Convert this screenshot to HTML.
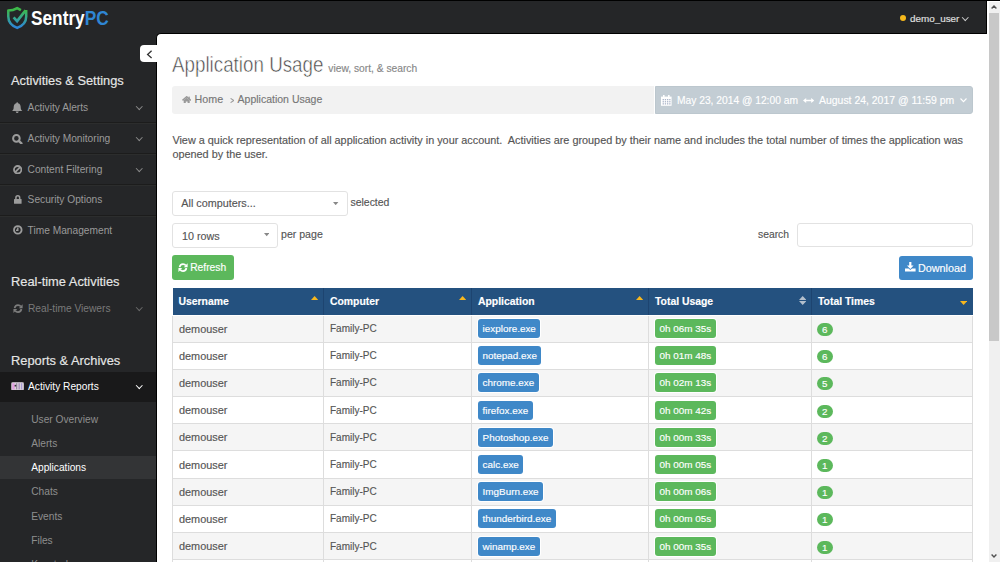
<!DOCTYPE html>
<html><head><meta charset="utf-8">
<style>
*{box-sizing:border-box;margin:0;padding:0}
html,body{width:1000px;height:562px;overflow:hidden;background:#fff}
body{position:relative;font-family:"Liberation Sans",sans-serif;color:#555;-webkit-text-stroke:0.15px currentColor}
.a{position:absolute}
.t{position:absolute;white-space:pre;line-height:1}
#frame{position:absolute;left:0;top:0;width:987px;height:562px;background:#252628;border-top:1px solid #000;border-right:1px solid #000}
#panel{position:absolute;left:156px;top:33px;width:831px;height:540px;background:#fff;border-left:1px solid #000;border-top:1px solid #000;border-top-left-radius:5px}
#sb{position:absolute;left:987px;top:0;width:13px;height:562px;background:#fff}
.sec{color:#e6e6e6;font-size:12.85px}
.itm{color:#9a9a9a;font-size:10.2px;-webkit-text-stroke:0}
.sub{color:#8e8e8e;font-size:10.2px;-webkit-text-stroke:0}
.div{position:absolute;left:0;width:156px;height:2px;border-top:1px solid #1c1c1c;background:#2c2d2d}
.chev{position:absolute;width:6px;height:6px;border-right:1.3px solid #8a8a8a;border-bottom:1.3px solid #8a8a8a;transform:rotate(45deg)}
table{position:absolute;left:172px;top:288px;width:801px;border-collapse:collapse}
th{background:#24517f;color:#fff;font-weight:bold;font-size:10.4px;text-align:left;height:27px;padding:1px 0 0 6px;border-bottom:1px solid #fff;border-left:1px solid #1d4470;position:relative}
td{height:27.2px;font-size:10.4px;color:#555;padding:0 0 0 6px;border:1px solid #ddd;border-top:0;white-space:nowrap}
tr:nth-child(even) td{background:#f5f5f5}
td:nth-child(1){font-size:10.9px}
td:nth-child(2){font-size:10px}
.lb{display:inline-block;background:#3f88c8;color:#fff;font-size:9.9px;line-height:19px;height:19px;padding:0 4.4px 0 4.6px;border-radius:3px;vertical-align:middle;position:relative;top:0px;box-shadow:0 0 0 1px #fff}
.lg{display:inline-block;background:#5cb85c;color:#fff;font-size:9.9px;line-height:19px;height:19px;padding:0 4.4px 0 4.6px;border-radius:3px;vertical-align:middle;position:relative;top:0px;box-shadow:0 0 0 1px #fff}
.bd{display:inline-block;background:#5cb85c;color:#fff;font-size:9.8px;line-height:13px;height:13px;width:15.5px;text-align:center;border-radius:7px;vertical-align:middle;margin-left:-1px;position:relative;top:1px}
</style></head><body>
<div id="frame"></div>
<!-- navbar -->
<svg class="a" style="left:4px;top:4px" width="28" height="28" viewBox="0 0 28 28">
<defs><linearGradient id="sg" gradientUnits="userSpaceOnUse" x1="0" y1="4" x2="0" y2="24"><stop offset="0.1" stop-color="#3db94a"/><stop offset="0.5" stop-color="#35a78f"/><stop offset="0.95" stop-color="#2d86d6"/></linearGradient></defs>
<path d="M16.9 6.2L13.2 4.1C10.5 5.7 7.5 6.5 4.3 6.5V12.5C4.3 18 8 21.9 13.2 23.9C18.4 21.9 22.2 18 22.2 12.5V6" fill="none" stroke="url(#sg)" stroke-width="2.5" stroke-linejoin="round"/>
<path d="M9.6 13.4L13.1 17.2L21.6 6.4" fill="none" stroke="url(#sg)" stroke-width="2.7"/>
</svg>
<div class="t" style="left:30.8px;top:7.6px;font-size:20.2px;font-weight:bold;color:#fff;-webkit-text-stroke:0;transform-origin:0 0;transform:scaleX(0.855)">Sentry<span style="color:#2f86d4">PC</span></div>
<div class="a" style="left:899.8px;top:14.8px;width:6.4px;height:6.4px;border-radius:50%;background:#f6b81c"></div>
<div class="t" style="left:910px;top:13.6px;font-size:9.9px;color:#e0e0e0">demo_user</div>
<div class="chev" style="left:963px;top:14.5px;width:4.5px;height:4.5px;border-color:#ccc;border-width:0 1.1px 1.1px 0"></div>

<!-- panel -->
<div id="panel"></div>
<div class="a" style="left:140px;top:45px;width:17px;height:17px;background:#fff;border-radius:4px 0 0 4px"></div>
<svg class="a" style="left:145.5px;top:50px" width="7" height="9" viewBox="0 0 7 9"><path d="M5.6 0.8L1.6 4.4L5.6 8" fill="none" stroke="#333" stroke-width="1.3"/></svg>

<!-- sidebar -->
<div class="t sec" style="left:11px;top:74.7px">Activities &amp; Settings</div>
<div class="t itm" style="left:27.6px;top:103.0px">Activity Alerts</div>
<div class="div" style="top:122px"></div>
<div class="t itm" style="left:27.6px;top:134.3px">Activity Monitoring</div>
<div class="div" style="top:153px"></div>
<div class="t itm" style="left:27.6px;top:165.0px">Content Filtering</div>
<div class="div" style="top:184px"></div>
<div class="t itm" style="left:27.6px;top:195.4px">Security Options</div>
<div class="div" style="top:215px"></div>
<div class="t itm" style="left:27.6px;top:226.0px">Time Management</div>
<div class="chev" style="left:136.5px;top:104px;border-color:#8a8a8a;width:4.5px;height:4.5px;border-width:0 1.1px 1.1px 0"></div>
<div class="chev" style="left:136.5px;top:135px;border-color:#8a8a8a;width:4.5px;height:4.5px;border-width:0 1.1px 1.1px 0"></div>
<div class="chev" style="left:136.5px;top:166px;border-color:#8a8a8a;width:4.5px;height:4.5px;border-width:0 1.1px 1.1px 0"></div>

<div class="t sec" style="left:11px;top:275.7px">Real-time Activities</div>
<div class="t itm" style="left:28px;top:304.1px;color:#7a7a7a">Real-time Viewers</div>
<div class="chev" style="left:136.5px;top:305px;border-color:#6a6a6a;width:4.5px;height:4.5px;border-width:0 1.1px 1.1px 0"></div>

<div class="t sec" style="left:11px;top:354.5px">Reports &amp; Archives</div>
<div class="a" style="left:0;top:372px;width:156px;height:30px;background:#19191a"></div>
<div class="t itm" style="left:28px;top:382.1px;color:#fff">Activity Reports</div>
<div class="chev" style="left:136.5px;top:383px;border-color:#fff;width:4.5px;height:4.5px;border-width:0 1.3px 1.3px 0"></div>


<div class="t sub" style="left:31.2px;top:414.9px">User Overview</div>
<div class="t sub" style="left:31.2px;top:438.9px">Alerts</div>
<div class="a" style="left:0;top:455.5px;width:156px;height:23.5px;background:#333436"></div>
<div class="t sub" style="left:31.2px;top:462.9px;color:#fff">Applications</div>
<div class="t sub" style="left:31.2px;top:487.4px">Chats</div>
<div class="t sub" style="left:31.2px;top:511.7px">Events</div>
<div class="t sub" style="left:31.2px;top:535.7px">Files</div>
<div class="t sub" style="left:31.2px;top:559.7px">Keystrokes</div>


<!-- sidebar icons -->
<svg class="a" style="left:12.4px;top:102px" width="10.4" height="11" viewBox="0 0 10.4 11"><path d="M5.2 0.3C5.8 0.3 6.1 0.7 6.1 1.2C8 1.7 8.7 3.4 8.7 5.3C8.7 7.3 9.3 8.1 10.3 8.9L0.1 8.9C1.1 8.1 1.7 7.3 1.7 5.3C1.7 3.4 2.4 1.7 4.3 1.2C4.3 0.7 4.6 0.3 5.2 0.3Z M3.7 9.4L6.7 9.4C6.7 10.3 6 10.9 5.2 10.9C4.4 10.9 3.7 10.3 3.7 9.4Z" fill="#9c9c9c"/></svg>
<svg class="a" style="left:12.4px;top:133.6px" width="10.4" height="10.4" viewBox="0 0 10.4 10.4"><circle cx="4.4" cy="4.4" r="3.3" fill="none" stroke="#9c9c9c" stroke-width="2"/><path d="M6.8 6.8L9.4 9.4" stroke="#9c9c9c" stroke-width="2.4" stroke-linecap="round"/></svg>
<svg class="a" style="left:13px;top:165px" width="9.4" height="9.4" viewBox="0 0 9.4 9.4"><circle cx="4.7" cy="4.7" r="3.7" fill="none" stroke="#9c9c9c" stroke-width="1.8"/><path d="M7.2 2.2L2.2 7.2" stroke="#9c9c9c" stroke-width="1.8"/></svg>
<svg class="a" style="left:14px;top:194.8px" width="7.6" height="8.8" viewBox="0 0 7.6 8.8"><path d="M1.9 4V2.9C1.9 1.6 2.7 0.8 3.8 0.8C4.9 0.8 5.7 1.6 5.7 2.9V4" fill="none" stroke="#9c9c9c" stroke-width="1.5"/><rect x="0" y="3.9" width="7.6" height="4.9" rx="0.6" fill="#9c9c9c"/></svg>
<svg class="a" style="left:13px;top:224.8px" width="9.6" height="9.8" viewBox="0 0 9.6 9.8"><circle cx="4.8" cy="4.9" r="3.8" fill="none" stroke="#9c9c9c" stroke-width="1.8"/><path d="M4.8 2.6V5.2H3" fill="none" stroke="#9c9c9c" stroke-width="1.4"/></svg>
<svg class="a" style="left:12.8px;top:303.8px" width="10" height="9.2" viewBox="0 0 10 9.2"><path d="M1.6 4.2C1.9 2.3 3.3 1.1 5 1.1C6.2 1.1 7.2 1.6 7.8 2.5" fill="none" stroke="#7c7c7c" stroke-width="1.7"/><path d="M9.6 0.2V4.2H5.8Z" fill="#7c7c7c"/><path d="M8.4 5C8.1 6.9 6.7 8.1 5 8.1C3.8 8.1 2.8 7.6 2.2 6.7" fill="none" stroke="#7c7c7c" stroke-width="1.7"/><path d="M0.4 9V5H4.2Z" fill="#7c7c7c"/></svg>
<svg class="a" style="left:11px;top:381.6px" width="13.2" height="8.6" viewBox="0 0 13.2 8.6"><rect x="0.3" y="0.3" width="12.6" height="8" rx="1.6" fill="#d9d2da" stroke="#bdb5c0" stroke-width="0.6"/><rect x="1.3" y="1.2" width="2.4" height="6.2" fill="#e29ee0"/><rect x="5.2" y="1.2" width="1" height="6.2" fill="#8a7a95"/><rect x="7.6" y="1.2" width="1.1" height="6.2" fill="#9b7fb3"/><rect x="10" y="1.2" width="1.2" height="6.2" fill="#a99cd6"/><circle cx="4.4" cy="3.7" r="0.9" fill="#333"/></svg>

<!-- content -->
<div class="t" style="left:172.3px;top:54.3px;font-size:21.6px;color:#444;-webkit-text-stroke:0.55px #fff;transform-origin:0 0;transform:scaleX(0.87)">Application Usage</div>
<div class="t" style="left:328.3px;top:63.8px;font-size:10.25px;color:#888">view, sort, &amp; search</div>

<div class="a" style="left:172px;top:86px;width:482px;height:28px;background:#f2f2f2;border-radius:3px 0 0 3px"></div>
<div class="t" style="left:194.6px;top:94.4px;font-size:10.7px;color:#777">Home</div>
<div class="t" style="left:237.6px;top:94.2px;font-size:10.5px;color:#777">Application Usage</div>

<div class="a" style="left:655px;top:86px;width:317.5px;height:28px;background:#c3cdd4;border:1px solid #bcc7ce;border-radius:0 3px 3px 0"></div>
<div class="t" style="left:677px;top:96.1px;font-size:10.26px;color:#fff">May 23, 2014 @ 12:00 am</div>
<div class="t" style="left:819px;top:96.1px;font-size:10.45px;color:#fff">August 24, 2017 @ 11:59 pm</div>

<div class="t" style="left:172.4px;top:134.7px;font-size:10.86px;color:#555">View a quick representation of all application activity in your account.  Activities are grouped by their name and includes the total number of times the application was</div>
<div class="t" style="left:172.4px;top:149.3px;font-size:10.86px;color:#555">opened by the user.</div>

<div class="a" style="left:172px;top:191px;width:176px;height:24.5px;border:1px solid #e2e2e2;border-radius:3px"></div>
<div class="t" style="left:181.3px;top:198.2px;font-size:10.8px;color:#555">All computers...</div>
<div class="t" style="left:350.5px;top:198.1px;font-size:10.44px;color:#555">selected</div>

<div class="a" style="left:172px;top:223.4px;width:106px;height:24.5px;border:1px solid #e2e2e2;border-radius:3px"></div>
<div class="t" style="left:182px;top:230.5px;font-size:10.77px;color:#555">10 rows</div>
<div class="t" style="left:281px;top:229.4px;font-size:10.59px;color:#555">per page</div>

<div class="t" style="left:758px;top:229.6px;font-size:10.33px;color:#555">search</div>
<div class="a" style="left:797px;top:223.4px;width:176px;height:24px;border:1px solid #e2e2e2;border-radius:3px"></div>

<div class="a" style="left:172px;top:255.4px;width:61.5px;height:24.8px;background:#5cb85c;border-radius:3px"></div>
<div class="t" style="left:190.2px;top:263.3px;font-size:10.28px;color:#fff">Refresh</div>
<div class="a" style="left:899px;top:255.6px;width:74px;height:24.4px;background:#3f88c8;border-radius:3px"></div>
<div class="t" style="left:918px;top:263.2px;font-size:10.79px;color:#fff">Download</div>


<!-- content icons -->
<svg class="a" style="left:181.6px;top:95.6px" width="9.4" height="7.6" viewBox="0 0 9.4 7.6"><path d="M0.5 4.4L4.7 0.8L8.9 4.4" fill="none" stroke="#999" stroke-width="1.5"/><rect x="6.5" y="0.6" width="1.3" height="2.6" fill="#999"/><path d="M1.7 4.3L4.7 1.8L7.7 4.3V7.6H5.6V5.4H3.8V7.6H1.7Z" fill="#999"/></svg>
<svg class="a" style="left:229.6px;top:97.8px" width="4.6" height="5" viewBox="0 0 4.6 5"><path d="M0.6 0.4L3.8 2.5L0.6 4.6" fill="none" stroke="#999" stroke-width="1.1"/></svg>
<svg class="a" style="left:661.2px;top:95px" width="10.6" height="10.8" viewBox="0 0 10.6 10.8"><path d="M0 1.6H10.6V10.8H0Z" fill="#fff"/><rect x="2" y="0" width="1.6" height="2.6" fill="#fff"/><rect x="7" y="0" width="1.6" height="2.6" fill="#fff"/><g fill="#aab4c8"><rect x="1.6" y="4" width="1.3" height="1.3"/><rect x="3.8" y="4" width="1.3" height="1.3"/><rect x="6" y="4" width="1.3" height="1.3"/><rect x="8.2" y="4" width="1.3" height="1.3"/><rect x="1.6" y="6.1" width="1.3" height="1.3"/><rect x="3.8" y="6.1" width="1.3" height="1.3"/><rect x="6" y="6.1" width="1.3" height="1.3"/><rect x="8.2" y="6.1" width="1.3" height="1.3"/><rect x="1.6" y="8.2" width="1.3" height="1.3"/><rect x="3.8" y="8.2" width="1.3" height="1.3"/><rect x="6" y="8.2" width="1.3" height="1.3"/><rect x="8.2" y="8.2" width="1.3" height="1.3"/></g></svg>
<svg class="a" style="left:802.9px;top:97.6px" width="11.4" height="5" viewBox="0 0 11.4 5"><path d="M2.5 2.5H8.9" stroke="#fff" stroke-width="1.5"/><path d="M0 2.5L3.2 0V5Z M11.4 2.5L8.2 0V5Z" fill="#fff"/></svg>
<svg class="a" style="left:959.6px;top:98.2px" width="7" height="4.4" viewBox="0 0 7 4.4"><path d="M0.5 0.5L3.5 3.6L6.5 0.5" fill="none" stroke="#fff" stroke-width="1.1"/></svg>
<svg class="a" style="left:333.4px;top:201.6px" width="5.4" height="3.2" viewBox="0 0 5.4 3.2"><path d="M0 0H5.4L2.7 3.2Z" fill="#888"/></svg>
<svg class="a" style="left:264px;top:233.4px" width="5.4" height="3.2" viewBox="0 0 5.4 3.2"><path d="M0 0H5.4L2.7 3.2Z" fill="#888"/></svg>
<svg class="a" style="left:178px;top:263px" width="10" height="9.2" viewBox="0 0 10 9.2"><path d="M1.6 4.2C1.9 2.3 3.3 1.1 5 1.1C6.2 1.1 7.2 1.6 7.8 2.5" fill="none" stroke="#fff" stroke-width="1.7"/><path d="M9.6 0.2V4.2H5.8Z" fill="#fff"/><path d="M8.4 5C8.1 6.9 6.7 8.1 5 8.1C3.8 8.1 2.8 7.6 2.2 6.7" fill="none" stroke="#fff" stroke-width="1.7"/><path d="M0.4 9V5H4.2Z" fill="#fff"/></svg>
<svg class="a" style="left:905px;top:262.3px" width="10.6" height="9.6" viewBox="0 0 10.6 9.6"><path d="M4.2 0H6.4V3.6H8.6L5.3 7L2 3.6H4.2Z" fill="#fff"/><path d="M0 6.4H3.6L5.3 8L7 6.4H10.6V9.6H0Z" fill="#fff"/></svg>

<table>
<tr><th style="width:151px;border-left:0">Username</th><th style="width:148px">Computer</th><th style="width:177px">Application</th><th style="width:163px">Total Usage</th><th>Total Times</th></tr>
<tr><td>demouser</td><td>Family-PC</td><td><span class="lb">iexplore.exe</span></td><td><span class="lg">0h 06m 35s</span></td><td><span class="bd">6</span></td></tr>
<tr><td>demouser</td><td>Family-PC</td><td><span class="lb">notepad.exe</span></td><td><span class="lg">0h 01m 48s</span></td><td><span class="bd">6</span></td></tr>
<tr><td>demouser</td><td>Family-PC</td><td><span class="lb">chrome.exe</span></td><td><span class="lg">0h 02m 13s</span></td><td><span class="bd">5</span></td></tr>
<tr><td>demouser</td><td>Family-PC</td><td><span class="lb">firefox.exe</span></td><td><span class="lg">0h 00m 42s</span></td><td><span class="bd">2</span></td></tr>
<tr><td>demouser</td><td>Family-PC</td><td><span class="lb">Photoshop.exe</span></td><td><span class="lg">0h 00m 33s</span></td><td><span class="bd">2</span></td></tr>
<tr><td>demouser</td><td>Family-PC</td><td><span class="lb">calc.exe</span></td><td><span class="lg">0h 00m 05s</span></td><td><span class="bd">1</span></td></tr>
<tr><td>demouser</td><td>Family-PC</td><td><span class="lb">ImgBurn.exe</span></td><td><span class="lg">0h 00m 06s</span></td><td><span class="bd">1</span></td></tr>
<tr><td>demouser</td><td>Family-PC</td><td><span class="lb">thunderbird.exe</span></td><td><span class="lg">0h 00m 05s</span></td><td><span class="bd">1</span></td></tr>
<tr><td>demouser</td><td>Family-PC</td><td><span class="lb">winamp.exe</span></td><td><span class="lg">0h 00m 35s</span></td><td><span class="bd">1</span></td></tr>
<tr><td>demouser</td><td>Family-PC</td><td><span class="lb">explorer.exe</span></td><td><span class="lg">0h 00m 02s</span></td><td><span class="bd">1</span></td></tr>
</table>


<svg class="a" style="left:310.6px;top:296.2px" width="7.2" height="4" viewBox="0 0 7.2 4"><path d="M0 4H7.2L3.6 0Z" fill="#f7b71e"/></svg>
<svg class="a" style="left:459.2px;top:296.2px" width="7.2" height="4" viewBox="0 0 7.2 4"><path d="M0 4H7.2L3.6 0Z" fill="#f7b71e"/></svg>
<svg class="a" style="left:635.6px;top:296.2px" width="7.2" height="4" viewBox="0 0 7.2 4"><path d="M0 4H7.2L3.6 0Z" fill="#f7b71e"/></svg>
<svg class="a" style="left:798.8px;top:296.2px" width="7.4" height="9" viewBox="0 0 7.4 9"><path d="M0 3.9H7.4L3.7 0Z M0 5H7.4L3.7 9Z" fill="#b3bfcc"/></svg>
<svg class="a" style="left:960px;top:301px" width="7.2" height="4" viewBox="0 0 7.2 4"><path d="M0 0H7.2L3.6 4Z" fill="#f7b71e"/></svg>

<!-- scrollbar -->
<div id="sb">
<div class="a" style="left:0;top:0;width:13px;height:1px;background:#000"></div>
<div class="a" style="left:2px;top:2px;width:11px;height:560px;background:#f0f0f0"></div>
<div class="a" style="left:2px;top:13px;width:10px;height:328px;background:#c8c8c8"></div>
<svg class="a" style="left:4px;top:5px" width="6" height="4" viewBox="0 0 6 4"><path d="M0.6 3.4L3 1L5.4 3.4" fill="none" stroke="#505050" stroke-width="1.4"/></svg>
<svg class="a" style="left:4px;top:554px" width="6" height="4" viewBox="0 0 6 4"><path d="M0.6 0.6L3 3L5.4 0.6" fill="none" stroke="#505050" stroke-width="1.4"/></svg>
</div>
</body></html>
